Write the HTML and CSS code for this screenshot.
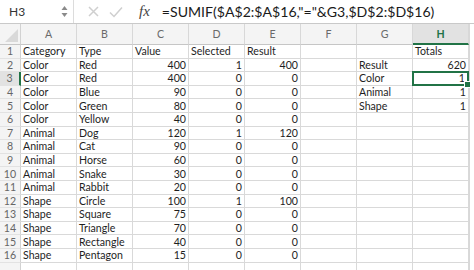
FILE: index.html
```html
<!DOCTYPE html>
<html lang="en">
<head>
    <meta charset="UTF-8">
    <title>SUMIF sheet</title>
    <link rel="stylesheet" href="styles.css">
</head>
<body>
    <div class="formula-bar">
        <div class="name-box">
            <span class="cell-ref">H3</span>
            <svg class="spinner" width="7" height="13" viewBox="0 0 7 13">
                <path d="M3.5 1 L6.5 5 L0.5 5 Z" fill="#8a8a8a"/>
                <path d="M3.5 12 L6.5 8 L0.5 8 Z" fill="#8a8a8a"/>
            </svg>
        </div>
        <div class="fx-tools">
            <svg width="11" height="11" viewBox="0 0 11 11">
                <path d="M1 1 L10 10 M10 1 L1 10" stroke="#cfcfcf" stroke-width="1.5" fill="none"/>
            </svg>
            <svg width="14" height="12" viewBox="0 0 14 12">
                <path d="M1 6.5 L5 10.5 L13 1.5" stroke="#cfcfcf" stroke-width="1.5" fill="none"/>
            </svg>
            <span class="fx">fx</span>
        </div>
        <div class="formula">=SUMIF($A$2:$A$16,"="&amp;G3,$D$2:$D$16)</div>
    </div>

    <div class="sheet" id="sheet"></div>

    <script>
        const sheet = document.getElementById('sheet');
        const cols = ['A', 'B', 'C', 'D', 'E', 'F', 'G', 'H'];
        const rows = [
            ['Category', 'Type', 'Value', 'Selected', 'Result', '', '', 'Totals'],
            ['Color', 'Red', 400, 1, 400, '', 'Result', 620],
            ['Color', 'Red', 400, 0, 0, '', 'Color', 1],
            ['Color', 'Blue', 90, 0, 0, '', 'Animal', 1],
            ['Color', 'Green', 80, 0, 0, '', 'Shape', 1],
            ['Color', 'Yellow', 40, 0, 0],
            ['Animal', 'Dog', 120, 1, 120],
            ['Animal', 'Cat', 90, 0, 0],
            ['Animal', 'Horse', 60, 0, 0],
            ['Animal', 'Snake', 30, 0, 0],
            ['Animal', 'Rabbit', 20, 0, 0],
            ['Shape', 'Circle', 100, 1, 100],
            ['Shape', 'Square', 75, 0, 0],
            ['Shape', 'Triangle', 70, 0, 0],
            ['Shape', 'Rectangle', 40, 0, 0],
            ['Shape', 'Pentagon', 15, 0, 0]
        ];

        function cell(cls, text) {
            const div = document.createElement('div');
            div.className = cls;
            div.textContent = text;
            sheet.appendChild(div);
            return div;
        }

        cell('corner', '');
        cols.forEach(c => cell(c === 'H' ? 'col-head active' : 'col-head', c));
        cell('gutter', '');

        rows.forEach((row, i) => {
            const n = i + 1;
            cell(n === 3 ? 'row-head active' : 'row-head', n);
            for (let j = 0; j < 8; j++) {
                const v = row[j] === undefined ? '' : row[j];
                let cls = typeof v === 'number' ? 'cell num' : 'cell';
                if (n === 3 && j === 7) cls += ' selected';
                cell(cls, v);
            }
            cell('gutter', '');
        });

        // row 17 is only partly in view, its number is below the edge
        cell('row-head', '');
        for (let j = 0; j < 8; j++) cell('cell', '');
        cell('gutter', '');
    </script>
</body>
</html>
```

FILE: styles.css
```css
body {
    margin: 0;
    background-color: #fff;
    font-family: Lato, "Liberation Sans", sans-serif;
    color: #1e1e1e;
    overflow: hidden;
}

.formula-bar {
    display: flex;
    align-items: center;
    height: 23px;
    border-bottom: 1px solid #c9c9c9;
    background-color: #fff;
}

.name-box {
    display: flex;
    align-items: center;
    justify-content: space-between;
    box-sizing: border-box;
    width: 74px;
    height: 100%;
    padding: 0 5px 0 9px;
    border-right: 1px solid #dcdcdc;
}

.cell-ref {
    font-size: 12px;
    color: #333;
}

.fx-tools {
    display: flex;
    align-items: center;
    gap: 10px;
    padding-left: 14px;
}

.fx {
    font-family: "Liberation Serif", serif;
    font-style: italic;
    font-size: 15px;
    color: #444;
    margin-left: 6px;
}

.formula {
    margin-left: 12px;
    font-size: 14.1px;
    color: #1a1a1a;
}

.sheet {
    display: grid;
    grid-template-columns: 21px repeat(8, 56px) 1fr;
    grid-template-rows: 21px repeat(17, 13.6px);
    font-size: 10.6px;
}

.sheet > div {
    box-sizing: border-box;
    white-space: nowrap;
    overflow: hidden;
}

.corner {
    position: relative;
    background-color: #f4f4f4;
    border-right: 1px solid #d2d2d2;
    border-bottom: 1px solid #c6c6c6;
}

.corner::after {
    content: "";
    position: absolute;
    right: 2px;
    bottom: 2px;
    border-left: 13px solid transparent;
    border-bottom: 13px solid #d9d9d9;
}

.col-head {
    display: flex;
    align-items: center;
    justify-content: center;
    background-color: #f4f4f4;
    color: #6a6a6a;
    border-right: 1px solid #d8d8d8;
    border-bottom: 1px solid #c6c6c6;
}

.col-head.active {
    background-color: #e2e2e2;
    color: #217346;
    font-weight: bold;
    border-bottom: 2px solid #217346;
}

.gutter {
    background-color: #fff;
    border-left: 1px solid #d8d8d8;
}

.row-head {
    display: flex;
    align-items: center;
    justify-content: center;
    background-color: #f4f4f4;
    color: #666;
    border-right: 1px solid #d2d2d2;
    border-bottom: 1px solid #e2e2e2;
}

.row-head.active {
    background-color: #e2e2e2;
    border-right: 2px solid #217346;
}

.cell {
    display: flex;
    align-items: center;
    padding: 0 2px;
    border-right: 1px solid #d9d9d9;
    border-bottom: 1px solid #d9d9d9;
}

.cell.num {
    justify-content: flex-end;
}

.cell.selected {
    position: relative;
    overflow: visible;
    border: 2px solid #217346;
    margin: -1px 0 0 -1px;
}

.cell.selected::after {
    content: "";
    position: absolute;
    right: -4px;
    bottom: -4px;
    width: 5px;
    height: 5px;
    background-color: #217346;
    border: 1px solid #fff;
}
```
